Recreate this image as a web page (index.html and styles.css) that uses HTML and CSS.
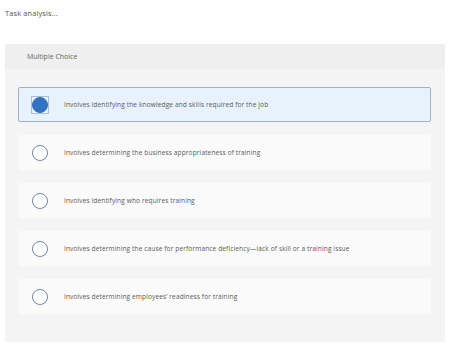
FILE: index.html
```html
<!DOCTYPE html>
<html lang="en">
<head>
    <meta charset="UTF-8">
    <title>Task analysis</title>
    <link rel="stylesheet" href="styles.css">
</head>
<body>
<p class='prompt'>Task analysis...</p>
<div class='panel'>
    <div class='panelHead'>Multiple Choice</div>
    <ul class='options'>
        <li class='option selected'><span class='focus'><span class='radio'></span></span>Involves identifying the knowledge and skills required for the job</li>
        <li class='option'><span class='focus'><span class='radio'></span></span>Involves determining the business appropriateness of training</li>
        <li class='option'><span class='focus'><span class='radio'></span></span>Involves identifying who requires training</li>
        <li class='option'><span class='focus'><span class='radio'></span></span>Involves determining the cause for performance deficiency&mdash;lack of skill or a training issue</li>
        <li class='option'><span class='focus'><span class='radio'></span></span>Involves determining employees&rsquo; readiness for training</li>
    </ul>
</div>
</body>
</html>
```
FILE: styles.css
```css
*{
    margin:0;
    padding:0;
    box-sizing:border-box;
}
ul,li{
    list-style:none;
}
body{
    background:#fff;
    font-family:"Open Sans",Lato,sans-serif;
    color:#333;
}
.prompt{
    padding:8px 5px 0;
    height:44px;
    font-size:7.4px;
    line-height:10px;
    letter-spacing:0.15px;
    color:#555;
}
.panel{
    width:440px;
    margin-left:5px;
    background:#f4f4f4;
}
.panel .panelHead{
    height:25px;
    padding-left:22px;
    line-height:25px;
    font-size:7px;
    color:#666;
    background:#efefef;
}
.panel .options{
    display:flex;
    flex-direction:column;
    gap:13px;
    padding:18px 14px 28px 13px;
}
.option{
    display:flex;
    align-items:center;
    gap:15px;
    height:35px;
    padding-left:12px;
    font-size:6.6px;
    letter-spacing:0.1px;
    color:#5a5a5a;
    background:#fafafa;
    border:1px solid #fafafa;
    border-radius:2px;
}
.option.selected{
    background:#e8f2fc;
    border-color:#9fb3c8;
}
.option .focus{
    display:flex;
    border:1px solid transparent;
}
.option.selected .focus{
    border-color:#a9bfd8;
}
.option .radio{
    width:16px;
    height:16px;
    border:1.5px solid #6b88a6;
    border-radius:50%;
    background:#fff;
}
.option.selected .radio{
    border-color:#2e6bbd;
    background:#3373c4;
}
```
